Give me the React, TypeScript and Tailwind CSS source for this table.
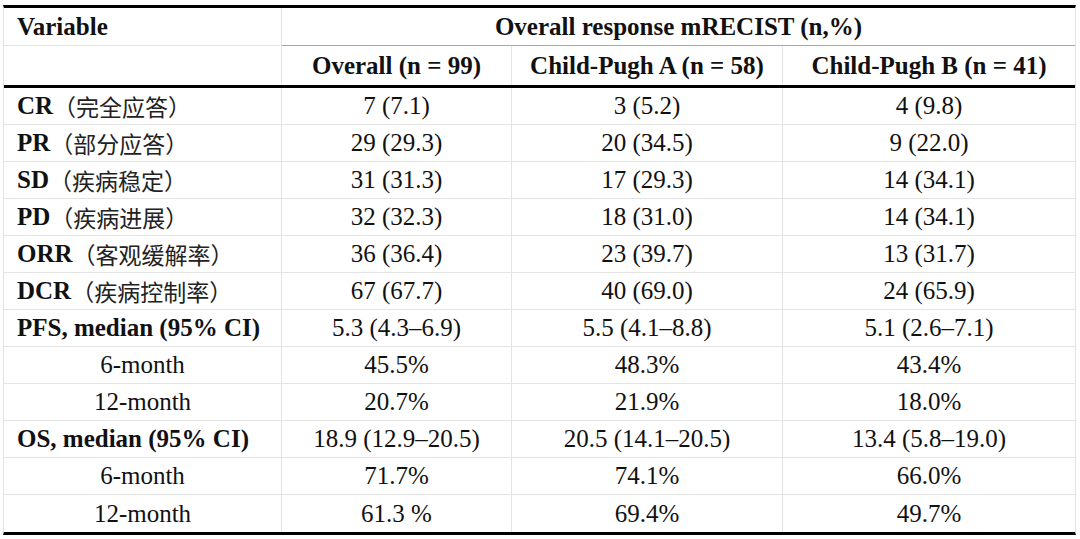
const serif = "font-['Liberation_Serif','Times_New_Roman','Noto_Sans_CJK_SC',serif]"

type Row = {
  label: string
  zh?: string
  sub?: boolean
  values: [string, string, string]
}

const rows: Row[] = [
  { label: 'CR', zh: '（完全应答）', values: ['7 (7.1)', '3 (5.2)', '4 (9.8)'] },
  { label: 'PR', zh: '（部分应答）', values: ['29 (29.3)', '20 (34.5)', '9 (22.0)'] },
  { label: 'SD', zh: '（疾病稳定）', values: ['31 (31.3)', '17 (29.3)', '14 (34.1)'] },
  { label: 'PD', zh: '（疾病进展）', values: ['32 (32.3)', '18 (31.0)', '14 (34.1)'] },
  { label: 'ORR', zh: '（客观缓解率）', values: ['36 (36.4)', '23 (39.7)', '13 (31.7)'] },
  { label: 'DCR', zh: '（疾病控制率）', values: ['67 (67.7)', '40 (69.0)', '24 (65.9)'] },
  { label: 'PFS, median (95% CI)', values: ['5.3 (4.3–6.9)', '5.5 (4.1–8.8)', '5.1 (2.6–7.1)'] },
  { label: '6-month', sub: true, values: ['45.5%', '48.3%', '43.4%'] },
  { label: '12-month', sub: true, values: ['20.7%', '21.9%', '18.0%'] },
  { label: 'OS, median (95% CI)', values: ['18.9 (12.9–20.5)', '20.5 (14.1–20.5)', '13.4 (5.8–19.0)'] },
  { label: '6-month', sub: true, values: ['71.7%', '74.1%', '66.0%'] },
  { label: '12-month', sub: true, values: ['61.3 %', '69.4%', '49.7%'] },
]

const widths = ['w-[230px]', 'w-[271px]', 'w-[292px]']

export default function App() {
  return (
    <div className={`w-[1080px] h-[539px] bg-white pl-[3px] pt-[5px] text-[#111] ${serif}`}>
      <div className="w-[1073px] border-t-[3px] border-b-[3px] border-t-black border-b-black border-l border-r border-l-[#e2e2e2] border-r-[#e2e2e2]">
        {/* header row 1 */}
        <div className="flex h-[38px]">
          <div className="w-[278px] border-r border-b border-[#e4e4e4] flex items-center pl-[13px] text-[25px] font-bold">
            Variable
          </div>
          <div className="flex-1 border-b border-[#a8a8a8] flex items-center justify-center text-[25px] font-bold">
            Overall response mRECIST (n,%)
          </div>
        </div>
        {/* header row 2 */}
        <div className="flex h-[42px] border-b-[3px] border-black">
          <div className="w-[278px] border-r border-[#e4e4e4]" />
          <div className="w-[230px] border-r border-[#e4e4e4] flex items-center justify-center text-[25px] font-bold">
            Overall (n = 99)
          </div>
          <div className="w-[271px] border-r border-[#e4e4e4] flex items-center justify-center text-[25px] font-bold">
            Child-Pugh A (n = 58)
          </div>
          <div className="w-[292px] flex items-center justify-center text-[25px] font-bold">
            Child-Pugh B (n = 41)
          </div>
        </div>
        {rows.map((r, i) => (
          <div
            key={i}
            className={`flex h-[37px] ${i < rows.length - 1 ? 'border-b border-[#e4e4e4]' : ''}`}
          >
            <div
              className={`w-[278px] border-r border-[#e4e4e4] flex items-center text-[25px] ${
                r.sub ? 'justify-center' : 'pl-[13px] font-bold'
              }`}
            >
              {r.label}
              {r.zh && (
                <span className="font-normal text-[23px] font-['Noto_Sans_CJK_SC',sans-serif] text-[#222]">
                  {r.zh}
                </span>
              )}
            </div>
            {r.values.map((v, j) => (
              <div
                key={j}
                className={`${widths[j]} ${j < 2 ? 'border-r border-[#e4e4e4]' : ''} flex items-center justify-center text-[25px]`}
              >
                {v}
              </div>
            ))}
          </div>
        ))}
      </div>
    </div>
  )
}
